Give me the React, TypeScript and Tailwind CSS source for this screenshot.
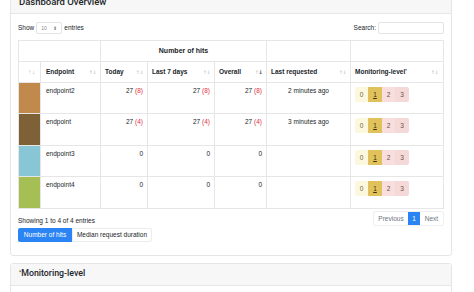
import React from "react";

type Row = {
  color: string;
  name: string;
  today: [string, string | null];
  week: [string, string | null];
  overall: [string, string | null];
  last: string;
  h: string;
};

const rows: Row[] = [
  { color: "#c2894c", name: "endpoint2", today: ["27", "(8)"], week: ["27", "(8)"], overall: ["27", "(8)"], last: "2 minutes ago", h: "h-[31px]" },
  { color: "#7e6137", name: "endpoint", today: ["27", "(4)"], week: ["27", "(4)"], overall: ["27", "(4)"], last: "3 minutes ago", h: "h-[32px]" },
  { color: "#88c6d6", name: "endpoint3", today: ["0", null], week: ["0", null], overall: ["0", null], last: "", h: "h-[31px]" },
  { color: "#a5bf55", name: "endpoint4", today: ["0", null], week: ["0", null], overall: ["0", null], last: "", h: "h-[32px]" },
];

function Sort({ active = false }: { active?: boolean }) {
  return (
    <span className="font-['DejaVu_Sans',sans-serif] text-[5px] leading-[6px] tracking-[-0.6px] whitespace-nowrap">
      <span className="text-[#cfcfcf]">↑</span>
      <span className={active ? "text-[#333]" : "text-[#cfcfcf]"}>↓</span>
    </span>
  );
}

function Num({ v }: { v: [string, string | null] }) {
  return (
    <span className="text-[#212529]">
      {v[0]}
      {v[1] && <span className="text-[#e0313f]"> {v[1]}</span>}
    </span>
  );
}

function Levels() {
  return (
    <div className="mt-[4px] ml-[4px] flex h-[15px] w-[54px] overflow-hidden rounded-[2px] text-[6.5px]">
      <div className="flex w-[13px] items-center justify-center bg-[#fcf8de] text-[#6b6245]">0</div>
      <div className="flex w-[14px] items-center justify-center bg-[#e0c15c] text-[#3a3000] underline">1</div>
      <div className="flex w-[13px] items-center justify-center bg-[#f8dfde] text-[#6a4a4a]">2</div>
      <div className="flex w-[14px] items-center justify-center bg-[#f5d9d8] text-[#6a4a4a]">3</div>
    </div>
  );
}

const cell = "border-r border-b border-[#e6e6e6]";

export default function App() {
  return (
    <div className="h-[292px] w-[474px] overflow-hidden bg-white pl-[10px] font-['Liberation_Sans',Arial,sans-serif] text-[#212529]">
      {/* Card 1 */}
      <div className="-mt-[11px] w-[442px] rounded-[3px] border border-[#e6e6e6] bg-white">
        <div className="border-b border-[#e6e6e6] bg-[#f7f7f7] px-[8px] py-[6px] font-['Roboto',sans-serif] text-[9.5px] font-medium leading-[11px]">
          Dashboard Overview
        </div>
        <div className="px-[7px] pt-[8px] pb-[13px] text-[6.5px] leading-[8px]">
          {/* controls */}
          <div className="flex h-[12px] items-center justify-between">
            <div className="flex items-center">
              <span>Show</span>
              <div className="ml-[2px] flex h-[12px] w-[26px] items-center justify-between rounded-[2px] border border-[#e3e3e3] px-[4px] text-[5px] text-[#8a8a8a]">
                <span>10</span>
                <span className="font-['DejaVu_Sans',sans-serif] text-[5px]">⬍</span>
              </div>
              <span className="ml-[2px]">entries</span>
            </div>
            <div className="flex items-center">
              <span>Search:</span>
              <div className="ml-[2px] h-[12px] w-[66px] rounded-[2px] border border-[#e3e3e3]" />
            </div>
          </div>

          {/* table */}
          <div className="mt-[6px] grid grid-cols-[22px_60px_47px_67px_52px_84px_93px] border-t border-l border-[#e6e6e6]">
            {/* header row 1 */}
            <div className={`col-span-2 h-[21px] ${cell}`} />
            <div className={`col-span-3 flex h-[21px] items-center justify-center text-[7px] font-bold ${cell}`}>
              Number of hits
            </div>
            <div className={`h-[21px] ${cell}`} />
            <div className={`h-[21px] ${cell}`} />

            {/* header row 2 */}
            <div className={`flex h-[21px] items-center justify-end pr-[5px] ${cell}`}>
              <Sort />
            </div>
            <div className={`flex h-[21px] items-center justify-between pl-[5px] pr-[4px] font-bold ${cell}`}>
              <span>Endpoint</span>
              <Sort />
            </div>
            <div className={`flex h-[21px] items-center justify-between pl-[4px] pr-[4px] font-bold ${cell}`}>
              <span>Today</span>
              <Sort />
            </div>
            <div className={`flex h-[21px] items-center justify-between pl-[4px] pr-[4px] font-bold ${cell}`}>
              <span>Last 7 days</span>
              <Sort />
            </div>
            <div className={`flex h-[21px] items-center justify-between pl-[4px] pr-[4px] font-bold ${cell}`}>
              <span>Overall</span>
              <Sort active />
            </div>
            <div className={`flex h-[21px] items-center justify-between pl-[4px] pr-[4px] font-bold ${cell}`}>
              <span>Last requested</span>
              <Sort />
            </div>
            <div className={`flex h-[21px] items-center justify-between pl-[4px] pr-[5px] font-bold ${cell}`}>
              <span>
                Monitoring-level<sup className="text-[4px]">*</sup>
              </span>
              <Sort />
            </div>

            {/* body */}
            {rows.map((r) => (
              <React.Fragment key={r.name}>
                <div className={`${r.h} ${cell}`} style={{ backgroundColor: r.color }} />
                <div className={`${r.h} pl-[5px] pt-[4px] ${cell}`}>{r.name}</div>
                <div className={`${r.h} pr-[4px] pt-[4px] text-right ${cell}`}>
                  <Num v={r.today} />
                </div>
                <div className={`${r.h} pr-[4px] pt-[4px] text-right ${cell}`}>
                  <Num v={r.week} />
                </div>
                <div className={`${r.h} pr-[4px] pt-[4px] text-right ${cell}`}>
                  <Num v={r.overall} />
                </div>
                <div className={`${r.h} pt-[4px] text-center ${cell}`}>{r.last}</div>
                <div className={`${r.h} ${cell}`}>
                  <Levels />
                </div>
              </React.Fragment>
            ))}
          </div>

          {/* footer */}
          <div className="mt-[2px] flex items-start justify-between">
            <div className="flex flex-col">
              <div className="mt-[6px] leading-[8px]">Showing 1 to 4 of 4 entries</div>
              <div className="mt-[3px] flex h-[14px]">
                <div className="flex w-[54px] items-center justify-center rounded-l-[2px] bg-[#2b84f3] text-white">
                  Number of hits
                </div>
                <div className="flex w-[80px] items-center justify-center rounded-r-[2px] border border-[#ececec] bg-white">
                  Median request duration
                </div>
              </div>
            </div>
            <div className="flex h-[15px] rounded-[2px] border border-[#efefef]">
              <div className="flex w-[34px] items-center justify-center text-[#6c757d]">Previous</div>
              <div className="flex w-[12px] items-center justify-center bg-[#2b84f3] text-white">1</div>
              <div className="flex w-[23px] items-center justify-center text-[#6c757d]">Next</div>
            </div>
          </div>
        </div>
      </div>

      {/* Card 2 */}
      <div className="mt-[7px] w-[442px] rounded-t-[3px] border border-[#e6e6e6] bg-white">
        <div className="border-b border-[#e6e6e6] bg-[#f7f7f7] px-[8px] pt-[4px] pb-[6px] font-['Roboto',sans-serif] text-[8.8px] font-medium leading-[11px]">
          <sup className="text-[5px]">*</sup>Monitoring-level
        </div>
        <div className="h-[30px]" />
      </div>
    </div>
  );
}
